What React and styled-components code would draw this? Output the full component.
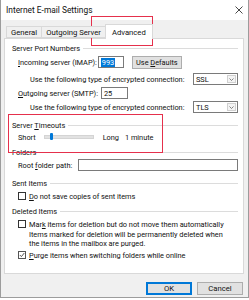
import React from 'react';
import styled, { createGlobalStyle } from 'styled-components';

const Global = createGlobalStyle`
  html, body { margin: 0; padding: 0; background: #fff; }
  body { font-family: Roboto, "Liberation Sans", sans-serif; font-size: 7.7px; color: #111; }
`;

const Window = styled.div`
  position: relative;
  width: 249px;
  height: 298px;
  box-sizing: border-box;
  border: 1px solid #9c9c9c;
  border-top: none;
  background: #f0f0f0;
  display: flex;
  flex-direction: column;
  overflow: hidden;
`;

const TitleBar = styled.div`
  height: 20px;
  flex: none;
  background: #fff;
  display: flex;
  align-items: center;
  justify-content: space-between;
  padding: 0 5px 0 5px;
  font-size: 8.4px;
`;

const Body = styled.div`
  padding: 4px 4px 0 3px;
  display: flex;
  flex-direction: column;
`;

const TabStrip = styled.div`
  display: flex;
  align-items: flex-end;
  height: 14px;
  padding-left: 2px;
  position: relative;
  z-index: 1;
`;

const Tab = styled.div`
  height: ${p => (p.$active ? '15px' : '12px')};
  margin-bottom: ${p => (p.$active ? '-1px' : '0')};
  padding: 0 ${p => (p.$active ? '6px' : '4px')};
  margin-left: ${p => (p.$active ? '-1px' : '0')};
  box-sizing: border-box;
  border: 1px solid #d9d9d9;
  border-bottom: ${p => (p.$active ? 'none' : '1px solid #d9d9d9')};
  border-right: ${p => (p.$last || p.$active ? '1px solid #d9d9d9' : 'none')};
  background: ${p => (p.$active ? '#fff' : '#f0f0f0')};
  display: flex;
  align-items: center;
  white-space: nowrap;
`;

const Panel = styled.div`
  height: 236px;
  box-sizing: border-box;
  background: #fff;
  border: 1px solid #d9d9d9;
  padding: 3px 5px 0 7px;
  display: flex;
  flex-direction: column;
  font-size: 7.4px;
  letter-spacing: -0.03px;
`;

const GroupHeader = styled.div`
  height: 12px;
  margin-top: ${p => p.$mt || 0}px;
  display: flex;
  align-items: center;
  white-space: nowrap;
  &::after {
    content: '';
    flex: 1;
    height: 1px;
    background: #dcdcdc;
    margin-left: 3px;
  }
`;

const Row = styled.div`
  height: ${p => p.$h || 12}px;
  margin-top: ${p => p.$mt || 0}px;
  padding-left: ${p => p.$indent || 6}px;
  display: flex;
  align-items: center;
  white-space: nowrap;
`;

const Spacer = styled.div`
  flex: 1;
`;

const TextBox = styled.div`
  width: ${p => p.$w}px;
  ${p => (p.$grow ? 'flex: 1;' : '')}
  height: 12px;
  box-sizing: border-box;
  border: 1px solid #7a7a7a;
  background: #fff;
  margin-left: ${p => p.$ml || 0}px;
  display: flex;
  align-items: center;
  padding-left: 2px;
`;

const Selected = styled.span`
  background: #0078d7;
  color: #fff;
  line-height: 9px;
  padding: 0 1px;
`;

const Button = styled.div`
  width: ${p => p.$w}px;
  height: 13px;
  box-sizing: border-box;
  border: 1px solid ${p => (p.$default ? '#0078d7' : '#adadad')};
  box-shadow: ${p => (p.$default ? 'inset 0 0 0 1px #0078d7' : 'none')};
  background: #e1e1e1;
  margin-left: ${p => p.$ml || 0}px;
  display: flex;
  align-items: center;
  justify-content: center;
  white-space: nowrap;
`;

const SelectBox = styled.div`
  width: 45px;
  height: 12px;
  box-sizing: border-box;
  border: 1px solid #7a7a7a;
  background: #fff;
  display: flex;
  align-items: center;
  padding-left: 2px;
`;

const ArrowBtn = styled.div`
  width: 9px;
  height: 8px;
  box-sizing: border-box;
  border: 1px solid #d0d0d0;
  background: #f4f4f4;
  margin-right: 1px;
  display: flex;
  align-items: center;
  justify-content: center;
`;

const Track = styled.div`
  position: relative;
  width: 48px;
  height: 2px;
  background: #e2e2e2;
  border: 1px solid #d4d4d4;
  margin: 0 9px 0 8px;
`;

const Thumb = styled.div`
  position: absolute;
  left: 5px;
  top: -3px;
  width: 3px;
  height: 7px;
  background: #0078d7;
  border-radius: 1px;
`;

const Check = styled.div`
  width: 8px;
  height: 8px;
  flex: none;
  box-sizing: border-box;
  border: 1px solid ${p => (p.$checked ? '#555' : '#333')};
  background: #fff;
  margin-right: 3px;
  display: flex;
  align-items: center;
  justify-content: center;
`;

const Note = styled.div`
  margin-top: 1px;
  padding-left: 17px;
  line-height: 8.5px;
  white-space: nowrap;
`;

const Footer = styled.div`
  display: flex;
  justify-content: flex-end;
  gap: 5px;
  padding: 8px 1px 0 0;
`;

const Highlight = styled.div`
  position: absolute;
  box-sizing: border-box;
  border: 1.5px solid #e5304c;
  left: ${p => p.$x}px;
  top: ${p => p.$y}px;
  width: ${p => p.$w}px;
  height: ${p => p.$h}px;
  pointer-events: none;
`;

const U = styled.span`
  text-decoration: underline;
  text-underline-offset: 1px;
`;

const Chevron = () => (
  <svg width="5" height="3" viewBox="0 0 5 3">
    <path d="M0.5 0.5 L2.5 2.5 L4.5 0.5" fill="none" stroke="#666" strokeWidth="0.8" />
  </svg>
);

const Tick = () => (
  <svg width="6" height="6" viewBox="0 0 6 6">
    <path d="M0.8 3 L2.4 4.6 L5.3 1" fill="none" stroke="#444" strokeWidth="0.9" />
  </svg>
);

const Dropdown = ({ value }) => (
  <SelectBox>
    <span>{value}</span>
    <Spacer />
    <ArrowBtn><Chevron /></ArrowBtn>
  </SelectBox>
);

export default function App() {
  return (
    <>
      <Global />
      <Window>
        <TitleBar>
          <span>Internet E-mail Settings</span>
          <svg width="8" height="8" viewBox="0 0 8 8">
            <path d="M0.5 0.5 L7.5 7.5 M7.5 0.5 L0.5 7.5" stroke="#333" strokeWidth="0.9" />
          </svg>
        </TitleBar>
        <Body>
          <TabStrip>
            <Tab>General</Tab>
            <Tab $last>Outgoing Server</Tab>
            <Tab $active>Advanced</Tab>
          </TabStrip>
          <Panel>
            <GroupHeader>Server Port Numbers</GroupHeader>
            <Row $h={14} $mt={1}>
              <span><U>I</U>ncoming server (IMAP):</span>
              <TextBox $w={26} $ml={1}><Selected>993</Selected></TextBox>
              <Button $w={50} $ml={8}><span>Use <U>D</U>efaults</span></Button>
            </Row>
            <Row $h={14} $mt={3} $indent={18}>
              <span>Use the following type of encrypted connection:</span>
              <Spacer />
              <Dropdown value="SSL" />
            </Row>
            <Row $h={14}>
              <span><U>O</U>utgoing server (SMTP):</span>
              <TextBox $w={27} $ml={3}>25</TextBox>
            </Row>
            <Row $h={14} $indent={18}>
              <span>Use the following type of encrypted connection:</span>
              <Spacer />
              <Dropdown value="TLS" />
            </Row>
            <GroupHeader $mt={5}><span>Server <U>T</U>imeouts</span></GroupHeader>
            <Row>
              <span>Short</span>
              <Track><Thumb /></Track>
              <span>Long</span>
              <span style={{ marginLeft: 6 }}>1 minute</span>
            </Row>
            <GroupHeader $mt={3}>Folders</GroupHeader>
            <Row $h={14}>
              <span>Root <U>f</U>older path:</span>
              <TextBox $grow $ml={6} />
            </Row>
            <GroupHeader $mt={5}>Sent Items</GroupHeader>
            <Row $mt={1}>
              <Check />
              <span><U>D</U>o not save copies of sent items</span>
            </Row>
            <GroupHeader $mt={3}>Deleted Items</GroupHeader>
            <Row $mt={1}>
              <Check />
              <span>Mar<U>k</U> items for deletion but do not move them automatically</span>
            </Row>
            <Note>
              Items marked for deletion will be permanently deleted when<br />
              the items in the mailbox are purged.
            </Note>
            <Row $mt={1}>
              <Check $checked><Tick /></Check>
              <span><U>P</U>urge items when switching folders while online</span>
            </Row>
          </Panel>
          <Footer>
            <Button $w={46} $default>OK</Button>
            <Button $w={46}>Cancel</Button>
          </Footer>
        </Body>
        <Highlight $x={90} $y={16} $w={62} $h={30} />
        <Highlight $x={7} $y={114} $w={155} $h={39} />
      </Window>
    </>
  );
}
